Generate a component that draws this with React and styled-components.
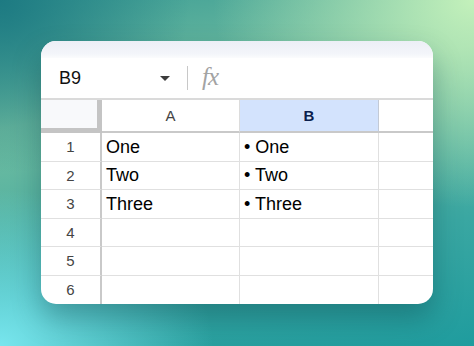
import React from "react";
import styled, { createGlobalStyle } from "styled-components";

const GlobalStyle = createGlobalStyle`
  html, body {
    margin: 0;
    padding: 0;
  }
  body {
    font-family: "Liberation Sans", Arial, sans-serif;
  }
`;

const rows = [
  { a: "One", b: "• One" },
  { a: "Two", b: "• Two" },
  { a: "Three", b: "• Three" },
  { a: "", b: "" },
  { a: "", b: "" },
  { a: "", b: "" },
];

const App = () => {
  return (
    <>
      <GlobalStyle />
      <Page>
        <Card>
          <TopStrip />
          <FormulaBar>
            <NameBox>
              <span>B9</span>
              <Caret />
            </NameBox>
            <Divider />
            <Fx>fx</Fx>
          </FormulaBar>
          <Sheet>
            <Corner />
            <ColHeader>A</ColHeader>
            <ColHeader $active>B</ColHeader>
            <ColHeader $last />
            {rows.map((row, i) => (
              <React.Fragment key={i}>
                <RowHeader $last={i === rows.length - 1}>{i + 1}</RowHeader>
                <Cell $lastRow={i === rows.length - 1}>{row.a}</Cell>
                <Cell $lastRow={i === rows.length - 1}>{row.b}</Cell>
                <Cell $lastRow={i === rows.length - 1} $lastCol />
              </React.Fragment>
            ))}
          </Sheet>
        </Card>
      </Page>
    </>
  );
};

const Page = styled.div`
  width: 474px;
  height: 346px;
  box-sizing: border-box;
  padding: 41px 41px 42px;
  overflow: hidden;
  background:
    radial-gradient(ellipse 55% 60% at 100% 0%, #c4f1bb 0%, rgba(196, 241, 187, 0) 100%),
    radial-gradient(ellipse 45% 45% at 0% 100%, #78e6ee 0%, rgba(120, 230, 238, 0) 100%),
    radial-gradient(ellipse 40% 50% at 0% 0%, #1d7a82 0%, rgba(29, 122, 130, 0) 100%),
    linear-gradient(170deg, #3f9f96 0%, #72bea0 30%, #3aa7a2 70%, #1f9c9e 100%);
`;

const Card = styled.div`
  height: 100%;
  background: #fff;
  border-radius: 15px;
  overflow: hidden;
  display: flex;
  flex-direction: column;
  box-shadow: 0 14px 28px rgba(10, 60, 70, 0.35);
`;

const TopStrip = styled.div`
  height: 17px;
  flex: none;
  background: linear-gradient(#eceff6, #f3f5fa 75%, #fbfcfd);
`;

const FormulaBar = styled.div`
  height: 40px;
  flex: none;
  display: flex;
  align-items: center;
  padding-left: 18px;
  border-bottom: 2px solid #dadada;
`;

const NameBox = styled.div`
  width: 111px;
  display: flex;
  align-items: center;
  justify-content: space-between;
  padding-right: 2px;
  font-size: 18px;
  color: #111;
`;

const Caret = styled.span`
  width: 0;
  height: 0;
  border-left: 5px solid transparent;
  border-right: 5px solid transparent;
  border-top: 5px solid #3c3c3c;
`;

const Divider = styled.div`
  width: 1px;
  height: 24px;
  background: #c8c8c8;
  margin: 0 15px;
`;

const Fx = styled.span`
  font-family: "Liberation Serif", "Times New Roman", serif;
  font-style: italic;
  font-size: 25px;
  color: #a3a3a3;
  letter-spacing: -1px;
  margin-top: -2px;
  margin-left: -1px;
`;

const Sheet = styled.div`
  flex: 1;
  display: grid;
  grid-template-columns: 61px 138px 139px 1fr;
  grid-template-rows: 33px repeat(6, 1fr);
`;

const Corner = styled.div`
  background: #f8f9fb;
  border-right: 5px solid #c4c4c4;
  border-bottom: 5px solid #c4c4c4;
`;

const ColHeader = styled.div`
  display: flex;
  align-items: center;
  justify-content: center;
  font-size: 15px;
  color: ${(p) => (p.$active ? "#0b1e4d" : "#444")};
  font-weight: ${(p) => (p.$active ? 700 : 400)};
  background: ${(p) => (p.$active ? "#d3e3fd" : "#fff")};
  border-bottom: 2px solid #c9c9c9;
  border-right: ${(p) =>
    p.$last ? "none" : p.$active ? "1px solid #c3cad6" : "1px solid #dcdcdc"};
`;

const RowHeader = styled.div`
  display: flex;
  align-items: center;
  justify-content: center;
  font-size: 15px;
  color: #444;
  border-right: 2px solid #c9c9c9;
  border-bottom: ${(p) => (p.$last ? "none" : "1px solid #e0e0e0")};
`;

const Cell = styled.div`
  display: flex;
  align-items: center;
  padding-left: 4px;
  padding-top: 1px;
  font-size: 18px;
  color: #000;
  border-right: ${(p) => (p.$lastCol ? "none" : "1px solid #e0e0e0")};
  border-bottom: ${(p) => (p.$lastRow ? "none" : "1px solid #e0e0e0")};
`;

export default App;
